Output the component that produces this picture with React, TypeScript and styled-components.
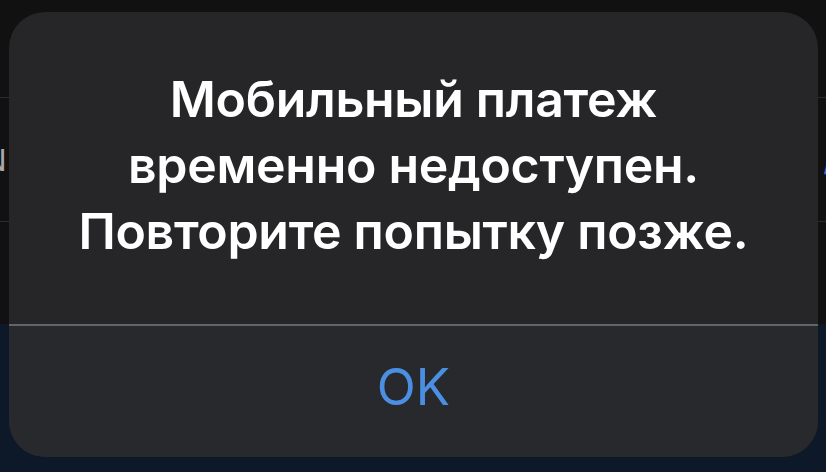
import styled, { createGlobalStyle } from "styled-components";

const GlobalStyle = createGlobalStyle`
  html, body {
    margin: 0;
    padding: 0;
    background: #111112;
  }
  body {
    font-family: Inter, "Noto Sans", "DejaVu Sans", sans-serif;
  }
`;

const Screen = styled.div`
  position: relative;
  width: 826px;
  height: 472px;
  overflow: hidden;
  display: flex;
  flex-direction: column;
`;

/* list behind the alert */
const Backdrop = styled.div`
  height: 324px;
  background: #111112;
  display: flex;
  flex-direction: column;
  padding-top: 97px;
  box-sizing: border-box;
`;

const BackRow = styled.div`
  height: 123px;
  border-top: 1px solid #2c2c2e;
  border-bottom: 1px solid #2c2c2e;
  display: flex;
  align-items: center;
  justify-content: space-between;
  margin-left: -16px;
  margin-right: -8px;
  font-size: 30px;
  color: #a8a8ad;
`;

const BackLink = styled.span`
  color: #2f6fd0;
  font-size: 30px;
`;

const Footer = styled.div`
  flex: 1;
  background: #0d1828;
`;

const Alert = styled.div`
  position: absolute;
  left: 9px;
  top: 12px;
  width: 809px;
  height: 445px;
  border-radius: 36px;
  overflow: hidden;
  display: flex;
  flex-direction: column;
  background: #262628;
`;

const Message = styled.div`
  height: 312px;
  display: flex;
  align-items: center;
  justify-content: center;
  padding-bottom: 6px;
  box-sizing: border-box;
  color: #ffffff;
  font-weight: 600;
  font-size: 50px;
  line-height: 66px;
  text-align: center;
  letter-spacing: -0.3px;
`;

const Divider = styled.div`
  height: 2px;
  background: #646466;
`;

const ActionButton = styled.button`
  flex: 1;
  border: none;
  background: #27292c;
  color: #4b8fe3;
  font-family: inherit;
  font-size: 51px;
  font-weight: 400;
  padding: 0 0 10px 0;
  cursor: pointer;
`;

export default function App() {
  return (
    <>
      <GlobalStyle />
      <Screen>
        <Backdrop>
          <BackRow>
            <span>N</span>
            <BackLink>/</BackLink>
          </BackRow>
        </Backdrop>
        <Footer />
        <Alert>
          <Message>
            Мобильный платеж
            <br />
            временно недоступен.
            <br />
            Повторите попытку позже.
          </Message>
          <Divider />
          <ActionButton>OK</ActionButton>
        </Alert>
      </Screen>
    </>
  );
}
